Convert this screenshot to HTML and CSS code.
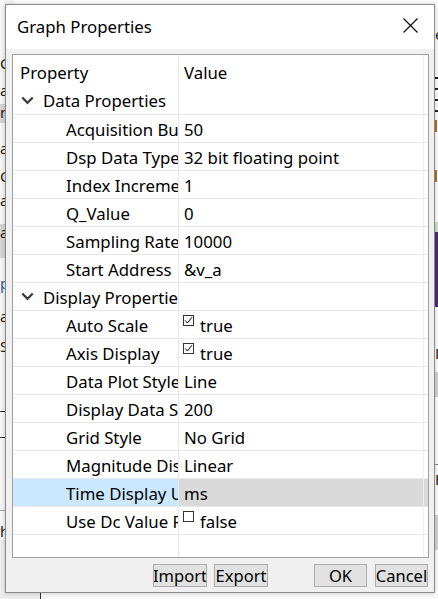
FILE: index.html
```html
<!DOCTYPE html>
<html>
<head>
<meta charset="utf-8">
<link rel="stylesheet" href="styles.css">
</head>
<body>
<div class="bgl">
  <div class="l h55"></div>
  <div class="l h20">C</div>
  <div class="l h7"></div>
  <div class="l h18">a:</div>
  <div class="l h4"></div>
  <div class="l h19 band">m</div>
  <div class="l h17"></div>
  <div class="l h20">a</div>
  <div class="l h8"></div>
  <div class="l h20">C_</div>
  <div class="l h4"></div>
  <div class="l h18">a</div>
  <div class="l h14"></div>
  <div class="l h34 band">a</div>
  <div class="l h17"></div>
  <div class="l h20 blue">p</div>
  <div class="l h13"></div>
  <div class="l h17">a</div>
  <div class="l h13"></div>
  <div class="l h18">S</div>
  <div class="l h40"></div>
  <div class="l h18">_C</div>
  <div class="l h8"></div>
  <div class="l h18">_C</div>
  <div class="l h70"></div>
  <div class="l h30 lined">h</div>
  <div class="l rest"></div>
</div>

<div class="bgr">
  <div class="r h28"></div>
  <div class="r h12">e</div>
  <div class="r h36"></div>
  <div class="r h38 ticks"></div>
  <div class="r h6"></div>
  <div class="r h12 orange"></div>
  <div class="r h38"></div>
  <div class="r h12 orange"></div>
  <div class="r h40"></div>
  <div class="r h10 green"></div>
  <div class="r h75 purple"></div>
  <div class="r h40"></div>
  <div class="r h14">L</div>
  <div class="r h11"></div>
  <div class="r h25 gband"></div>
  <div class="r h67"></div>
  <div class="r h1 dark"></div>
  <div class="r h8"></div>
  <div class="r h16">E</div>
  <div class="r h26"></div>
  <div class="r h35 gband"></div>
</div>

<div class="bgb">
  <div class="bgb-left"></div>
  <div class="bgb-line"></div>
  <div class="bgb-right"></div>
</div>

<div class="dialog">
  <div class="titlebar">
    <span class="title">Graph Properties</span>
    <svg class="close" width="15" height="15" viewBox="0 0 15 15"><path d="M0.5 0.5 L14.5 14.5 M14.5 0.5 L0.5 14.5" stroke="#000" stroke-width="1.1" fill="none"/></svg>
  </div>
  <div class="body">
    <div class="grid">
      <div class="row head"><div class="name">Property</div><div class="val">Value</div><div class="tail"></div></div>
      <div class="row cat first"><div class="name"><svg class="chev" width="13" height="9" viewBox="0 0 13 9"><path d="M1.3 1.5 L6.5 6.8 L11.7 1.5" stroke="#3c3c3c" stroke-width="2.3" fill="none"/></svg>Data Properties</div><div class="val"></div><div class="tail"></div></div>
      <div class="row"><div class="name">Acquisition Bu</div><div class="val">50</div><div class="tail"></div></div>
      <div class="row"><div class="name">Dsp Data Type</div><div class="val">32 bit floating point</div><div class="tail"></div></div>
      <div class="row"><div class="name">Index Increme</div><div class="val">1</div><div class="tail"></div></div>
      <div class="row"><div class="name">Q_Value</div><div class="val">0</div><div class="tail"></div></div>
      <div class="row"><div class="name">Sampling Rate</div><div class="val">10000</div><div class="tail"></div></div>
      <div class="row"><div class="name">Start Address</div><div class="val">&amp;v_a</div><div class="tail"></div></div>
      <div class="row cat"><div class="name"><svg class="chev" width="13" height="9" viewBox="0 0 13 9"><path d="M1.3 1.5 L6.5 6.8 L11.7 1.5" stroke="#3c3c3c" stroke-width="2.3" fill="none"/></svg>Display Propertie</div><div class="val"></div><div class="tail"></div></div>
      <div class="row"><div class="name">Auto Scale</div><div class="val"><span class="cb"><svg width="9" height="9" viewBox="0 0 9 9"><path d="M1.2 4.4 L3.4 7 L8 1.2" stroke="#000" stroke-width="1" fill="none"/></svg></span>true</div><div class="tail"></div></div>
      <div class="row"><div class="name">Axis Display</div><div class="val"><span class="cb"><svg width="9" height="9" viewBox="0 0 9 9"><path d="M1.2 4.4 L3.4 7 L8 1.2" stroke="#000" stroke-width="1" fill="none"/></svg></span>true</div><div class="tail"></div></div>
      <div class="row"><div class="name">Data Plot Style</div><div class="val">Line</div><div class="tail"></div></div>
      <div class="row"><div class="name">Display Data S</div><div class="val">200</div><div class="tail"></div></div>
      <div class="row"><div class="name">Grid Style</div><div class="val">No Grid</div><div class="tail"></div></div>
      <div class="row"><div class="name">Magnitude Dis</div><div class="val">Linear</div><div class="tail"></div></div>
      <div class="row sel"><div class="name">Time Display U</div><div class="val">ms</div><div class="tail"></div></div>
      <div class="row"><div class="name">Use Dc Value F</div><div class="val"><span class="cb"></span>false</div><div class="tail"></div></div>
      <div class="row filler"><div class="name"></div><div class="val"></div><div class="tail"></div></div>
    </div>
    <div class="footer">
      <button class="btn">Import</button>
      <button class="btn gap-small">Export</button>
      <button class="btn ok">OK</button>
      <button class="btn gap-ok">Cancel</button>
    </div>
  </div>
</div>
</body>
</html>
```

FILE: styles.css
```css
* { box-sizing: border-box; }
html, body { margin: 0; padding: 0; }
body {
  width: 438px;
  height: 599px;
  overflow: hidden;
  position: relative;
  background: #ffffff;
  font-family: "Noto Sans", "Segoe UI", sans-serif;
  font-size: 16.5px;
  color: #000;
}

/* background application behind the dialog */
.bgl {
  position: absolute;
  left: 0;
  top: 0;
  width: 14px;
  height: 599px;
  background: #f7f7f7;
  display: flex;
  flex-direction: column;
  font-size: 15px;
  color: #222;
}
.l { line-height: 16px; overflow: hidden; white-space: nowrap; flex: none; }
.bgr {
  position: absolute;
  left: 435px;
  top: 0;
  width: 3px;
  height: 599px;
  background: #ffffff;
  display: flex;
  flex-direction: column;
  font-size: 15px;
  color: #222;
  overflow: hidden;
}
.r { flex: none; line-height: 13px; overflow: hidden; white-space: nowrap; }
.h1 { height: 1px; } .h4 { height: 4px; } .h6 { height: 6px; } .h7 { height: 7px; }
.h8 { height: 8px; } .h10 { height: 10px; } .h11 { height: 11px; } .h12 { height: 12px; }
.h13 { height: 13px; } .h14 { height: 14px; } .h16 { height: 16px; } .h17 { height: 17px; }
.h18 { height: 18px; } .h19 { height: 19px; } .h20 { height: 20px; } .h25 { height: 25px; }
.h26 { height: 26px; } .h28 { height: 28px; } .h30 { height: 30px; } .h34 { height: 34px; }
.h35 { height: 35px; } .h36 { height: 36px; } .h38 { height: 38px; } .h40 { height: 40px; }
.h55 { height: 55px; } .h67 { height: 67px; } .h70 { height: 70px; } .h75 { height: 75px; }
.band { background: #d6d6d6; }
.blue { color: #2a5caa; }
.lined { border-top: 1px solid #a8a8a8; padding-top: 12px; }
.rest { flex: 1; background: #eeeeee; }
.ticks { background: repeating-linear-gradient(to bottom, transparent 0, transparent 1px, #222 1px, #222 3px, transparent 3px, transparent 11px); }
.orange { background: linear-gradient(to right, #b8701e 0, #b8701e 2px, transparent 2px); }
.green { background: #cfe2c6; }
.purple { background: #4d2c7c; }
.gband { background: #d5d5d5; }
.dark { background: #888; }

.bgb {
  position: absolute;
  left: 0;
  top: 593px;
  width: 438px;
  height: 6px;
  display: flex;
}
.bgb-left { width: 40px; background: #ececec; }
.bgb-line { width: 1px; background: #333; }
.bgb-right { flex: 1; background: #fafafa; }

/* dialog */
.dialog {
  position: absolute;
  left: 5px;
  top: 4px;
  width: 430px;
  height: 589px;
  border: 1px solid #8a8a8a;
  background: #f0f0f0;
  display: flex;
  flex-direction: column;
  box-shadow: 0 0 5px rgba(0, 0, 0, 0.22);
}
.titlebar {
  height: 44px;
  flex: none;
  background: #ffffff;
  display: flex;
  align-items: center;
  padding-left: 11px;
  padding-right: 16px;
}
.title { line-height: 22px; font-size: 16.8px; }
.close { margin-left: auto; margin-top: -3px; display: block; }

.body {
  flex: 1;
  display: flex;
  flex-direction: column;
  padding: 5px 5px 0 6px;
}
.grid {
  height: 504px;
  flex: none;
  border: 1px solid #a0a0a0;
  background: #ffffff;
  display: flex;
  flex-direction: column;
  font-size: 16.8px;
}
.row {
  display: flex;
  height: 28px;
  flex: none;
  border-top: 1px solid #e8e8e8;
}
.row.head { height: 31px; border-top: none; }
.row.first { border-top: none; }
.name {
  width: 166px;
  flex: none;
  border-right: 1px solid #e8e8e8;
  padding-left: 53px;
  padding-top: 2px;
  line-height: 25px;
  white-space: nowrap;
  overflow: hidden;
}
.val {
  flex: 1;
  padding-left: 5px;
  padding-top: 2px;
  line-height: 25px;
  white-space: nowrap;
  overflow: hidden;
}
.tail {
  width: 5px;
  flex: none;
  border-left: 1px solid #efefef;
}
.head .name, .head .val { padding-top: 5px; line-height: 26px; }
.head .name { padding-left: 7px; }
.cat .name { padding-left: 8px; display: flex; align-items: flex-start; }
.first .name, .first .val { line-height: 26px; }
.chev { flex: none; margin-right: 9px; margin-top: 8px; display: block; }
.row.cat:not(.first) .chev { margin-top: 7px; }
.sel .name { background: #cce8ff; }
.sel .val, .sel .tail { background: #d9d9d9; }
.filler { flex: 1; height: auto; }

.cb {
  display: inline-block;
  width: 11px;
  height: 11px;
  border: 1px solid #333;
  background: #fff;
  margin-left: -1px;
  margin-right: 6px;
  margin-top: 2px;
  vertical-align: top;
}
.cb svg { display: block; }

.footer {
  flex: 1;
  display: flex;
  justify-content: flex-end;
  align-items: flex-start;
  padding-top: 6px;
  padding-right: 1px;
}
.btn {
  height: 23px;
  width: 54px;
  border: 1px solid #adadad;
  background: #e1e1e1;
  font-family: inherit;
  font-size: 16.5px;
  color: #000;
  padding: 0;
  line-height: 21px;
  white-space: nowrap;
  overflow: hidden;
  display: flex;
  justify-content: center;
}
.gap-small { margin-left: 7px; }
.ok { width: 53px; margin-left: 46px; }
.gap-ok { width: 53px; margin-left: 8px; }
```
